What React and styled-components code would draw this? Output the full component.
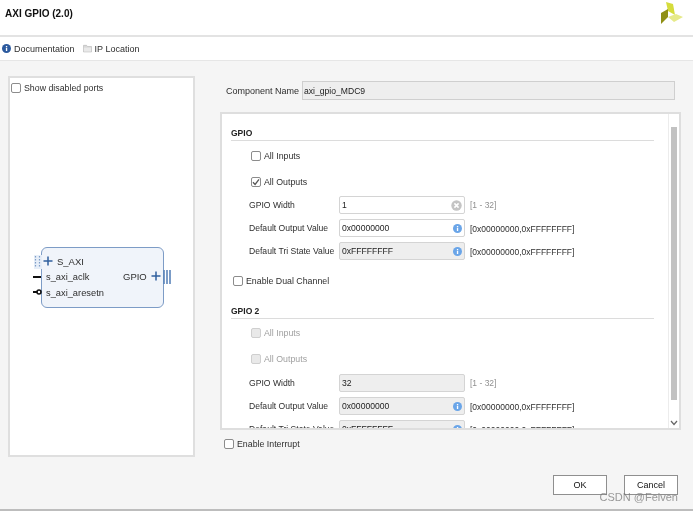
import React from "react";
import styled, { createGlobalStyle } from "styled-components";

const Global = createGlobalStyle`
  html, body { margin: 0; padding: 0; background: #fff; }
  body { font-family: "Liberation Sans", Arial, sans-serif; font-size: 9px; color: #2a2a2a; }
  #root { width: 693px; height: 512px; overflow: hidden; }
`;

const Page = styled.div`
  position: relative;
  width: 693px;
  height: 512px;
  display: flex;
  flex-direction: column;
  background: #fff;
  filter: blur(0.3px);
`;
const TitleBar = styled.header`
  height: 35px;
  flex: none;
  display: flex;
  align-items: center;
  justify-content: space-between;
  padding: 0 9px 9px 5px;
  box-sizing: border-box;
`;
const Title = styled.h1`
  margin: 0;
  font-size: 10px;
  font-weight: 700;
  color: #111;
`;
const LogoMark = styled.svg`
  width: 24px;
  height: 24px;
  flex: none;
`;
const Toolbar = styled.nav`
  height: 26px;
  flex: none;
  box-sizing: border-box;
  border-top: 2px solid #e3e3e3;
  border-bottom: 1px solid #e6e6e6;
  display: flex;
  align-items: center;
  padding-left: 2px;
`;
const ToolLink = styled.span`
  display: flex;
  align-items: center;
  gap: 3px;
  margin-right: 8px;
  color: #2e2e2e;
`;
const Main = styled.main`
  flex: 1;
  background: #f5f5f5;
  border-bottom: 2px solid #bdbdbd;
  margin-bottom: 1px;
  padding: 15px 0 0 8px;
  display: flex;
  flex-direction: column;
  min-height: 0;
`;
const Columns = styled.div`
  display: flex;
  flex: none;
`;
const PortsPanel = styled.section`
  width: 187px;
  height: 381px;
  box-sizing: border-box;
  background: #fff;
  border: 2px solid #dfdfdf;
  padding: 3px 0 0 1px;
  display: flex;
  flex-direction: column;
`;
const CheckRow = styled.label`
  display: flex;
  align-items: center;
  gap: 3px;
  height: ${(p) => p.$h || 26}px;
  padding-left: ${(p) => p.$indent || 0}px;
  margin-top: ${(p) => p.$top || 0}px;
  font-size: 8.8px;
  color: ${(p) => (p.$off ? "#a0a0a0" : "#2e2e2e")};
  flex: none;
`;
const CheckBox = styled.span`
  width: 10px;
  height: 10px;
  box-sizing: border-box;
  border: 1px solid ${(p) => (p.$off ? "#cfcfcf" : "#8c8c8c")};
  border-radius: 2px;
  background: ${(p) => (p.$off ? "#e9e9e9" : "#fff")};
  display: flex;
  align-items: center;
  justify-content: center;
  flex: none;
`;
const Block = styled.div`
  position: relative;
  box-sizing: border-box;
  width: 123px;
  height: 61px;
  margin: 153px 0 0 30px;
  background: #f0f4fa;
  border: 1px solid #7d9cc6;
  border-radius: 6px;
`;
const Port = styled.span`
  position: absolute;
  left: ${(p) => p.$x}px;
  top: ${(p) => p.$y}px;
  font-size: ${(p) => p.$size || 9.3}px;
  line-height: 12px;
  white-space: nowrap;
  color: #2e2e2e;
`;
const PinArt = styled.svg`
  position: absolute;
  left: ${(p) => p.$x}px;
  top: ${(p) => p.$y}px;
  overflow: visible;
`;
const RightColumn = styled.div`
  width: 461px;
  margin-left: 25px;
  display: flex;
  flex-direction: column;
`;
const NameRow = styled.div`
  display: flex;
  align-items: center;
  padding: 5px 0 0 6px;
  color: #2e2e2e;
`;
const NameLabel = styled.span`
  width: 76px;
  flex: none;
`;
const NameInput = styled.div`
  box-sizing: border-box;
  width: 373px;
  height: 19px;
  background: #eee;
  border: 1px solid #cfcfcf;
  display: flex;
  align-items: center;
  padding-left: 1px;
  font-size: 8.6px;
  color: #222;
`;
const ParamPanel = styled.section`
  margin-top: 12px;
  width: 461px;
  height: 318px;
  box-sizing: border-box;
  background: #fff;
  border: 2px solid #dedede;
  display: flex;
  overflow: hidden;
`;
const ParamScroll = styled.div`
  flex: 1;
  min-width: 0;
  overflow: hidden;
  padding: 13px 14px 0 9px;
`;
const Heading = styled.h2`
  margin: ${(p) => p.$top || 0}px 0 ${(p) => p.$bottom ?? 2}px;
  font-size: 8.5px;
  line-height: 13px;
  font-weight: 700;
  color: #222;
  border-bottom: 1px solid #dcdcdc;
`;
const FieldRow = styled.div`
  display: flex;
  align-items: center;
  height: 18px;
  margin-top: ${(p) => p.$top || 5}px;
  padding-left: 18px;
  color: #2e2e2e;
`;
const FieldLabel = styled.span`
  width: 90px;
  flex: none;
  white-space: nowrap;
  font-size: 8.6px;
`;
const FieldInput = styled.div`
  box-sizing: border-box;
  width: 126px;
  height: 18px;
  flex: none;
  border: 1px solid #d4d4d4;
  border-radius: 2px;
  background: ${(p) => (p.$off ? "#eee" : "#fff")};
  display: flex;
  align-items: center;
  justify-content: space-between;
  padding: 0 2px;
  font-size: 8.6px;
  color: #222;
`;
const Range = styled.span`
  margin: ${(p) => (p.$muted ? 0 : 2)}px 0 0 5px;
  white-space: nowrap;
  font-size: 8.5px;
  color: ${(p) => (p.$muted ? "#909090" : "#2e2e2e")};
`;
const Scrollbar = styled.div`
  width: 11px;
  flex: none;
  border-left: 1px solid #ececec;
  display: flex;
  flex-direction: column;
  align-items: center;
  padding-top: 13px;
  box-sizing: border-box;
`;
const Thumb = styled.div`
  width: 6px;
  height: 273px;
  background: #c2c2c2;
`;
const ScrollArrow = styled.svg`
  margin-top: 20px;
`;
const Footer = styled.footer`
  display: flex;
  justify-content: flex-end;
  gap: 17px;
  padding-right: 15px;
  margin-top: 18px;
`;
const Button = styled.button`
  box-sizing: border-box;
  width: 54px;
  height: 20px;
  background: #fff;
  border: 1px solid #8f8f8f;
  font: 9px "Liberation Sans", Arial, sans-serif;
  color: #111;
  padding: 0;
`;
const Watermark = styled.span`
  position: absolute;
  right: 15px;
  top: 491px;
  font-size: 11px;
  line-height: 13px;
  color: rgba(120, 120, 120, 0.75);
`;

const Check = ({ checked, off, label, indent, h, top }) => (
  <CheckRow $indent={indent} $off={off} $h={h} $top={top}>
    <CheckBox $off={off}>
      {checked && (
        <svg width="8" height="8" viewBox="0 0 8 8">
          <path d="M1 4.2 L3.1 6.4 L7 1.4" fill="none" stroke="#555" strokeWidth="1.3" />
        </svg>
      )}
    </CheckBox>
    {label}
  </CheckRow>
);

const InfoIcon = ({ size = 9, color = "#6aa5e8" }) => (
  <svg width={size} height={size} viewBox="0 0 10 10" style={{ flex: "none" }}>
    <circle cx="5" cy="5" r="5" fill={color} />
    <rect x="4.3" y="4.2" width="1.5" height="3.6" fill="#fff" />
    <rect x="4.3" y="2.2" width="1.5" height="1.3" fill="#fff" />
  </svg>
);
const ClearIcon = () => (
  <svg width="11" height="11" viewBox="0 0 11 11" style={{ flex: "none" }}>
    <circle cx="5.5" cy="5.5" r="5.2" fill="#c4c4c4" />
    <path d="M3.4 3.4 L7.6 7.6 M7.6 3.4 L3.4 7.6" stroke="#fff" strokeWidth="1.5" />
  </svg>
);
const FolderIcon = () => (
  <svg width="9" height="9" viewBox="0 0 10 10" style={{ flex: "none" }}>
    <path d="M0.5 1.5 H4 L5 2.8 H9.5 V8.8 H0.5 Z" fill="#d8d8d8" stroke="#b5b5b5" strokeWidth="0.7" />
    <rect x="1" y="4" width="8" height="4.4" fill="#e9e9e9" />
  </svg>
);

const Field = ({ label, value, off, icon, range, muted, top }) => (
  <FieldRow $top={top}>
    <FieldLabel>{label}</FieldLabel>
    <FieldInput $off={off}>
      {value}
      {icon === "clear" && <ClearIcon />}
      {icon === "info" && <InfoIcon />}
    </FieldInput>
    <Range $muted={muted}>{range}</Range>
  </FieldRow>
);

const RANGE = "[0x00000000,0xFFFFFFFF]";

export default function App() {
  return (
    <Page>
      <Global />
      <TitleBar>
        <Title>AXI GPIO (2.0)</Title>
        <LogoMark viewBox="0 0 24 24">
          <polygon points="6,1 13,3 15,14 8,10" fill="#d5dc3c" />
          <polygon points="8,16 16,13 23,16 14,21" fill="#e6ea8a" />
          <polygon points="1,12 8,8 8,16 1,23" fill="#8f8f14" />
        </LogoMark>
      </TitleBar>
      <Toolbar>
        <ToolLink>
          <InfoIcon color="#2c5a9e" />
          Documentation
        </ToolLink>
        <ToolLink>
          <FolderIcon />
          IP Location
        </ToolLink>
      </Toolbar>
      <Main>
        <Columns>
          <PortsPanel>
            <Check label="Show disabled ports" h={13} />
            <Block>
              <PinArt $x={-8} $y={7} width="8" height="14">
                <rect x="0" y="0" width="8" height="14" fill="#e6eef8" />
                <path d="M1.5 1 V13 M5.5 1 V13" stroke="#7d9cc6" strokeWidth="1.2" strokeDasharray="1.4 1.6" />
              </PinArt>
              <PinArt $x={1} $y={8} width="10" height="10">
                <path d="M5 0.5 V9.5 M0.5 5 H9.5" stroke="#2f5f9e" strokeWidth="1.5" />
              </PinArt>
              <Port $x={15} $y={8} $size={9.5}>S_AXI</Port>
              <PinArt $x={-9} $y={28} width="8" height="3">
                <rect x="0" y="0" width="8" height="2" fill="#111" />
              </PinArt>
              <Port $x={4} $y={23}>s_axi_aclk</Port>
              <PinArt $x={-9} $y={40} width="9" height="8">
                <rect x="0" y="3" width="5" height="2" fill="#111" />
                <circle cx="6" cy="4" r="2" fill="#fff" stroke="#111" strokeWidth="1.6" />
              </PinArt>
              <Port $x={4} $y={39}>s_axi_aresetn</Port>
              <Port $x={81} $y={23} $size={9.5}>GPIO</Port>
              <PinArt $x={109} $y={23} width="10" height="10">
                <path d="M5 0.5 V9.5 M0.5 5 H9.5" stroke="#2f5f9e" strokeWidth="1.5" />
              </PinArt>
              <PinArt $x={121} $y={22} width="9" height="14">
                <path d="M1 0 V14 M4 0 V14 M7 0 V14" stroke="#5b84ba" strokeWidth="1.6" />
              </PinArt>
            </Block>
          </PortsPanel>
          <RightColumn>
            <NameRow>
              <NameLabel>Component Name</NameLabel>
              <NameInput>axi_gpio_MDC9</NameInput>
            </NameRow>
            <ParamPanel>
              <ParamScroll>
                <Heading>GPIO</Heading>
                <Check label="All Inputs" indent={20} />
                <Check label="All Outputs" indent={20} checked />
                <Field top={1} label="GPIO Width" value="1" icon="clear" range="[1 - 32]" muted />
                <Field label="Default Output Value" value="0x00000000" icon="info" range={RANGE} />
                <Field label="Default Tri State Value" value="0xFFFFFFFF" icon="info" off range={RANGE} />
                <Check label="Enable Dual Channel" indent={2} top={8} />
                <Heading $top={11} $bottom={1}>GPIO 2</Heading>
                <Check label="All Inputs" indent={20} off />
                <Check label="All Outputs" indent={20} off />
                <Field top={2} label="GPIO Width" value="32" off range="[1 - 32]" muted />
                <Field label="Default Output Value" value="0x00000000" icon="info" off range={RANGE} />
                <Field label="Default Tri State Value" value="0xFFFFFFFF" icon="info" off range={RANGE} />
              </ParamScroll>
              <Scrollbar>
                <Thumb />
                <ScrollArrow width="8" height="6" viewBox="0 0 8 6">
                  <path d="M1 1 L4 4.5 L7 1" fill="none" stroke="#666" strokeWidth="1.2" />
                </ScrollArrow>
              </Scrollbar>
            </ParamPanel>
            <Check label="Enable Interrupt" indent={4} h={14} top={7} />
          </RightColumn>
        </Columns>
        <Footer>
          <Button>OK</Button>
          <Button>Cancel</Button>
        </Footer>
      </Main>
      <Watermark>CSDN @Feiven</Watermark>
    </Page>
  );
}
